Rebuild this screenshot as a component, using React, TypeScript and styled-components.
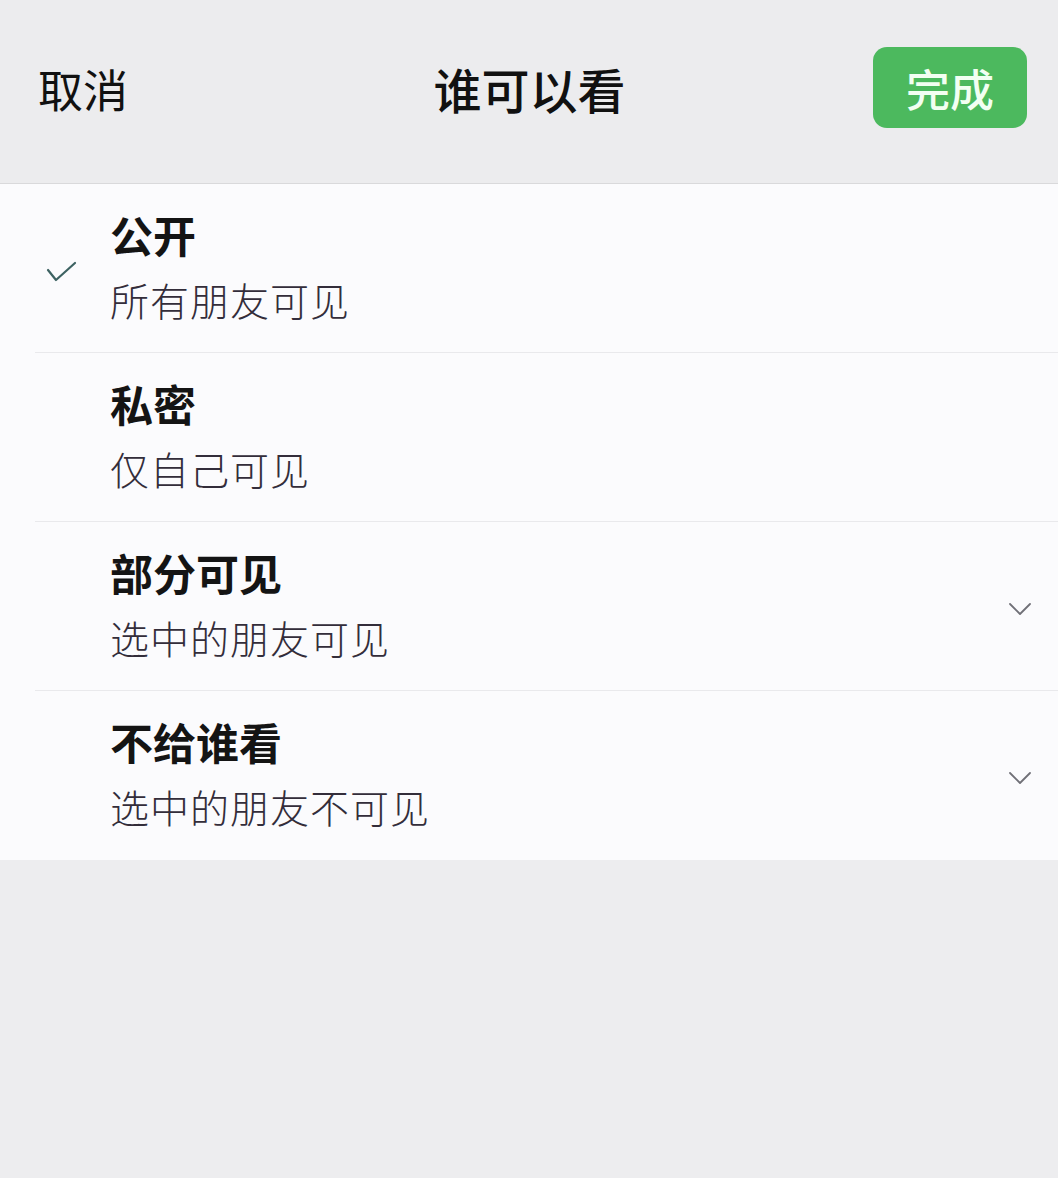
import React from "react";
import styled, { createGlobalStyle } from "styled-components";

const Global = createGlobalStyle`
  html, body { margin: 0; padding: 0; background: #ededef; }
  body { font-family: "Noto Sans CJK SC", "Noto Sans", sans-serif; }
`;

const Page = styled.div`
  width: 1058px;
  min-height: 1178px;
  background: #ededef;
  display: flex;
  flex-direction: column;
`;

const Header = styled.header`
  height: 184px;
  box-sizing: border-box;
  border-bottom: 1px solid #d9d9db;
  background: #ececee;
  display: grid;
  grid-template-columns: 1fr auto 1fr;
  align-items: center;
  padding: 0 31px 8px 38px;
`;

const Cancel = styled.span`
  justify-self: start;
  font-size: 45px;
  font-weight: 400;
  color: #111;
  line-height: 1;
  margin-top: 2px;
`;

const Title = styled.h1`
  margin: 0 0 0 -6px;
  font-size: 48px;
  font-weight: 500;
  color: #111;
  line-height: 1;
`;

const Done = styled.button`
  justify-self: end;
  width: 154px;
  height: 81px;
  border: none;
  border-radius: 14px;
  background: #4cb95e;
  color: #f2fff2;
  font-family: inherit;
  font-size: 44px;
  font-weight: 500;
  padding: 0;
  display: flex;
  align-items: center;
  justify-content: center;
`;

const List = styled.ul`
  list-style: none;
  margin: 0;
  padding: 0;
  background: #fbfbfd;
`;

const Row = styled.li<{ $last?: boolean }>`
  height: 169px;
  box-sizing: border-box;
  display: grid;
  grid-template-columns: 110px 1fr 80px;
  align-items: center;
  position: relative;
  &::after {
    content: "";
    display: ${(p) => (p.$last ? "none" : "block")};
    position: absolute;
    left: 35px;
    right: 0;
    bottom: 0;
    height: 1px;
    background: #e9e9ec;
  }
`;

const CheckCell = styled.div`
  display: flex;
  align-items: center;
  padding-left: 46px;
  padding-top: 8px;
`;

const Texts = styled.div`
  display: flex;
  flex-direction: column;
  gap: 17px;
  margin-top: -7px;
`;

const RowTitle = styled.div`
  font-size: 43px;
  font-weight: 700;
  color: #141414;
  line-height: 50px;
`;

const RowSub = styled.div`
  font-size: 39px;
  font-weight: 300;
  color: #332d3a;
  line-height: 46px;
  letter-spacing: 1px;
`;

const ChevronCell = styled.div`
  display: flex;
  justify-content: flex-start;
  padding-left: 30px;
  padding-top: 4px;
`;

const Check = () => (
  <svg width="32" height="24" viewBox="0 0 32 24" fill="none">
    <path d="M2 9 L10 19 L29 2" stroke="#3d6262" strokeWidth="2.2" strokeLinecap="round" strokeLinejoin="round" />
  </svg>
);

const Chevron = () => (
  <svg width="24" height="14" viewBox="0 0 24 14" fill="none">
    <path d="M2 2 L12 12 L22 2" stroke="#707077" strokeWidth="1.8" strokeLinecap="round" strokeLinejoin="round" />
  </svg>
);

const options = [
  { title: "公开", sub: "所有朋友可见", checked: true, more: false },
  { title: "私密", sub: "仅自己可见", checked: false, more: false },
  { title: "部分可见", sub: "选中的朋友可见", checked: false, more: true },
  { title: "不给谁看", sub: "选中的朋友不可见", checked: false, more: true },
];

export default function App() {
  return (
    <Page>
      <Global />
      <Header>
        <Cancel>取消</Cancel>
        <Title>谁可以看</Title>
        <Done>完成</Done>
      </Header>
      <List>
        {options.map((o, i) => (
          <Row key={o.title} $last={i === options.length - 1}>
            <CheckCell>{o.checked && <Check />}</CheckCell>
            <Texts>
              <RowTitle>{o.title}</RowTitle>
              <RowSub>{o.sub}</RowSub>
            </Texts>
            <ChevronCell>{o.more && <Chevron />}</ChevronCell>
          </Row>
        ))}
      </List>
    </Page>
  );
}
